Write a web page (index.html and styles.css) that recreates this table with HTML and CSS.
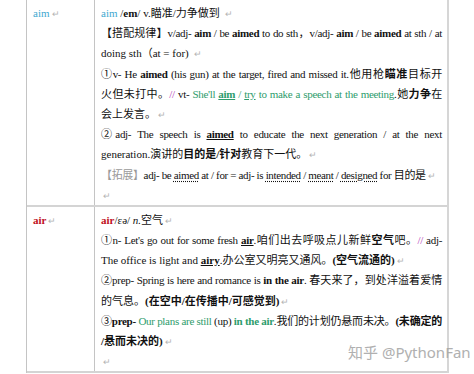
FILE: index.html
```html
<!DOCTYPE html>
<html>
<head>
<meta charset="utf-8">
<link rel="stylesheet" href="styles.css">
</head>
<body>
<div class="page">
  <div class="table">
    <div class="row first">
      <div class="word"><div class="l"><span class="blue">aim</span><span class="ret">↵</span></div></div>
      <div class="body">
        <div class="l"><span class="blue">aim</span> /<b>em</b>/ v.瞄准/力争做到 <span class="ret">↵</span></div>
        <div class="l j">【搭配规律】v/adj- <b>aim</b> / be <b>aimed</b> to do sth，v/adj- <b>aim</b> / be <b>aimed</b> at sth / at</div>
        <div class="l">doing sth（at = for) <span class="ret">↵</span></div>
        <div class="l j">①v- He <b>aimed</b> (his gun) at the target, fired and missed it.他用枪<b>瞄准</b>目标开</div>
        <div class="l j">火但未打中。<span class="purple">//</span> vt- <span class="green">She'll <b><u>aim</u></b> / <u>try</u> to make a speech at the meeting</span>.她<b>力争</b>在</div>
        <div class="l">会上发言。<span class="ret">↵</span></div>
        <div class="l j">②adj- The speech is <b><u>aimed</u></b> to educate the next generation / at the next</div>
        <div class="l">generation.演讲的<b>目的是/针对</b>教育下一代。<span class="ret">↵</span></div>
        <div class="l t"><span class="grey">【拓展】</span>adj- be <span class="dot">aimed</span> at / for = adj- is <span class="dot">intended</span> / <span class="dot">meant</span> / <span class="dot">designed</span> for 目的是<span class="ret">↵</span></div>
        <div class="l"><span class="ret">↵</span></div>
      </div>
    </div>
    <div class="row">
      <div class="word"><div class="l"><b class="red">air</b><span class="ret">↵</span></div></div>
      <div class="body">
        <div class="l"><b class="red">air</b>/ɛə/ <i>n.</i>空气<span class="ret">↵</span></div>
        <div class="l j">①n- Let's go out for some fresh <b><u>air</u></b>.咱们出去呼吸点儿新鲜<b>空气</b>吧。<span class="purple">//</span> adj-</div>
        <div class="l">The office is light and <b><u>airy</u></b>.办公室又明亮又通风。<b>(空气流通的)</b><span class="ret">↵</span></div>
        <div class="l j">②prep- Spring is here and romance is <b>in the air</b>. 春天来了，到处洋溢着爱情</div>
        <div class="l">的气息。<b>(在空中/在传播中/可感觉到)</b><span class="ret">↵</span></div>
        <div class="l j">③<b>prep-</b> <span class="green">Our plans are still</span> (up) <b class="green">in the air</b>.我们的计划仍悬而未决。<b>(未确定的</b></div>
        <div class="l"><b>/悬而未决的)</b><span class="ret">↵</span></div>
        <div class="l"><span class="ret">↵</span></div>
      </div>
    </div>
  </div>
  <div class="mark">知乎 @PythonFan</div>
</div>
</body>
</html>
```
FILE: styles.css
```css
html, body {
  margin: 0;
  padding: 0;
  background: #fff;
}
.page {
  position: relative;
  width: 474px;
  height: 374px;
  overflow: hidden;
  font-family: "Liberation Serif", "Noto Sans CJK SC", serif;
  font-size: 11px;
  color: #111;
}
.table {
  margin-left: 26px;
  width: 423px;
  border-left: 1px solid #c4c4c4;
  border-right: 2px solid #d6d6d6;
  box-sizing: border-box;
}
.row {
  display: grid;
  grid-template-columns: 68px 1fr;
  border-bottom: 2px solid #d4d4d4;
}
.word {
  border-right: 1px solid #c4c4c4;
  padding: 3px 0 0 6px;
}
.body {
  padding: 3px 5px 0 6px;
}
.first .word,
.first .body {
  padding-top: 3px;
}
.l {
  height: 20.2px;
  line-height: 20.2px;
  white-space: nowrap;
}
.j {
  text-align: justify;
  text-align-last: justify;
  letter-spacing: -0.3px;
}
.t {
  letter-spacing: -0.35px;
}
.ret {
  color: #b4b4b4;
  font-size: 9px;
  margin-left: 2px;
}
.blue { color: #3ea9d0; }
.red { color: #c0101e; }
.green { color: #2e9c6c; }
.purple { color: #b23ab8; }
.grey { color: #9a9a9a; }
.dot {
  text-decoration: underline dotted;
  text-underline-offset: 2px;
}
u {
  text-underline-offset: 1px;
}
.mark {
  position: absolute;
  left: 348px;
  top: 341px;
  font-family: "Noto Sans", "Noto Sans CJK SC", sans-serif;
  font-size: 15px;
  color: #a8a8a8;
  white-space: nowrap;
  opacity: 0.9;
}
```
